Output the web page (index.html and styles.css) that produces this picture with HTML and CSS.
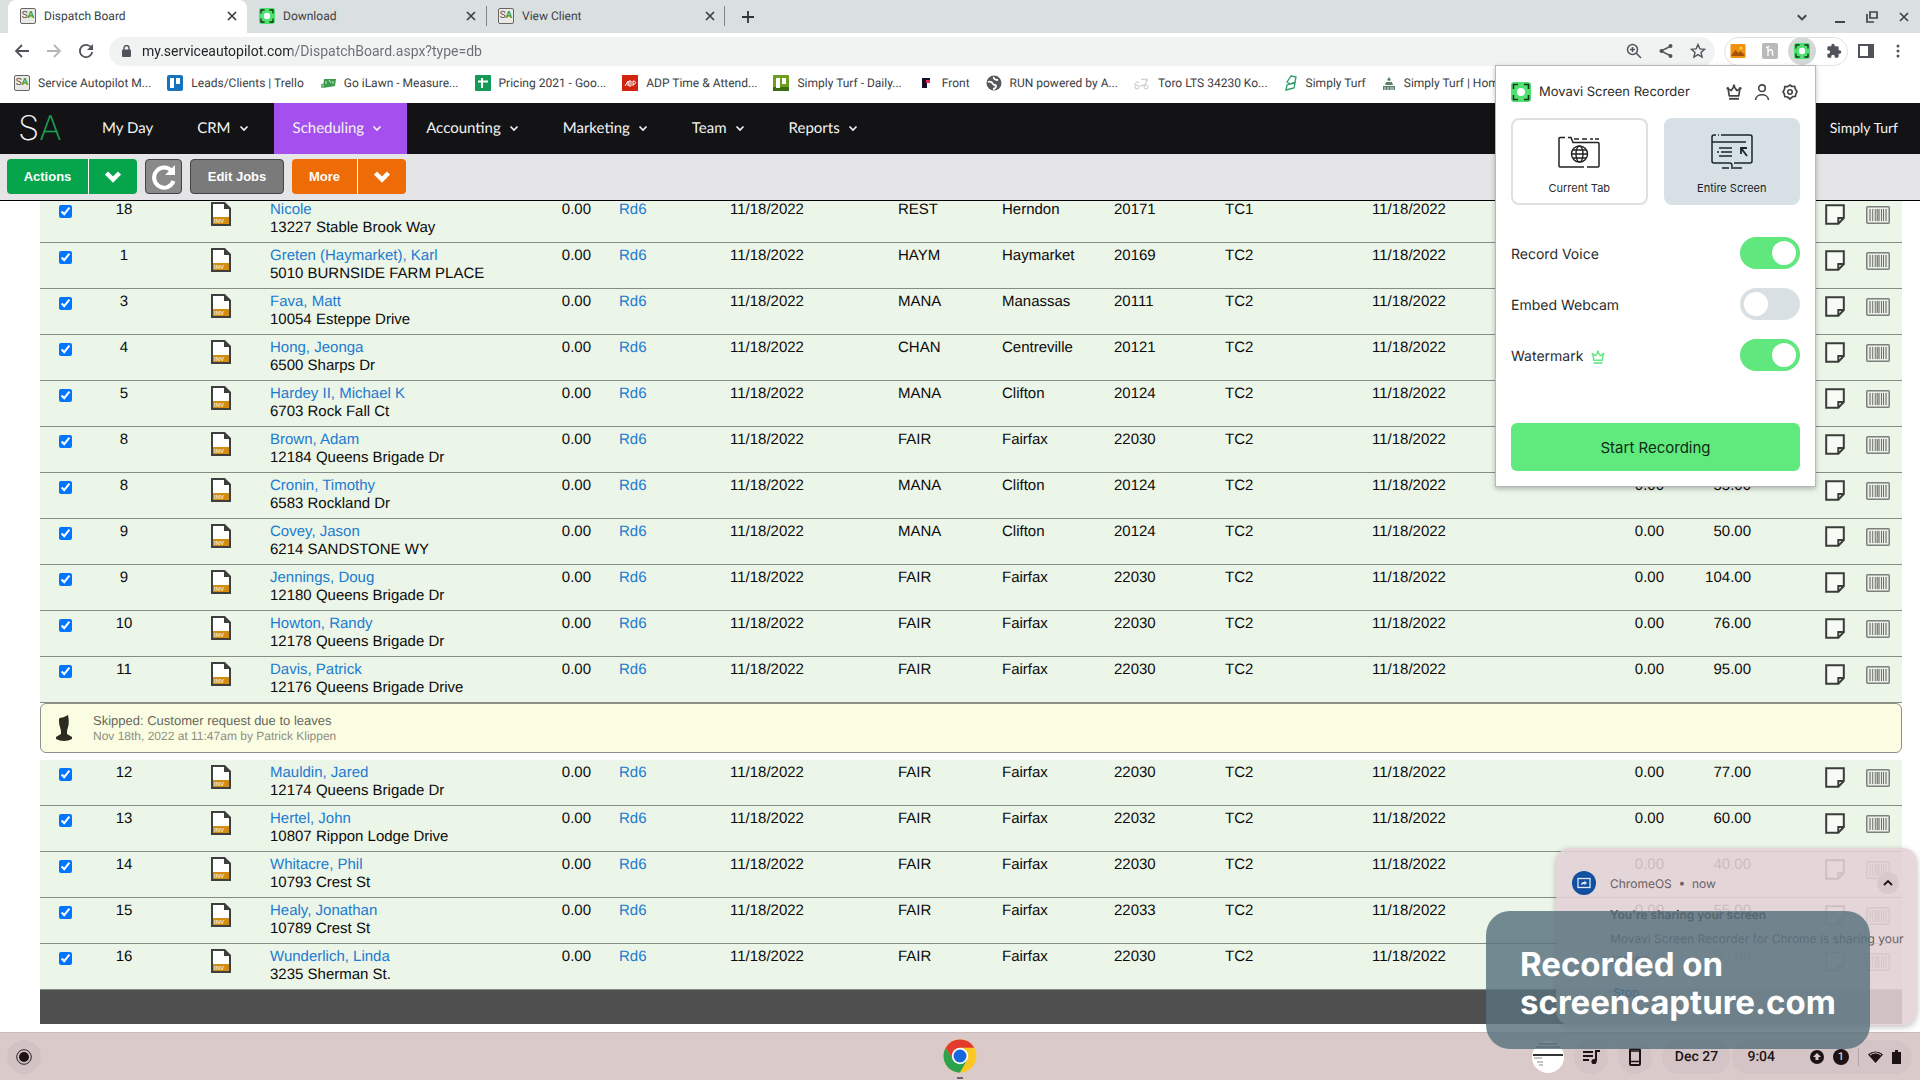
FILE: index.html
```html
<!DOCTYPE html>
<html lang="en">
<head>
    <meta charset="UTF-8">
    <meta name="viewport" content="width=device-width, initial-scale=1.0">
    <title>Dispatch Board</title>
    <link rel="stylesheet" href="styles.css">
</head>
<body>
    <!-- shared icons -->
    <svg class="sprite" aria-hidden="true">
        <symbol id="i-close" viewBox="0 0 10 10"><path d="M1 1l8 8M9 1L1 9" stroke="currentColor" stroke-width="1.7" fill="none"/></symbol>
        <symbol id="i-chev" viewBox="0 0 10 10"><path d="M1.5 3.5L5 7l3.5-3.5" stroke="currentColor" stroke-width="1.7" fill="none"/></symbol>
        <symbol id="i-bigchev" viewBox="0 0 18 14"><path d="M2.5 3L9 9.5 15.500 3" stroke="currentColor" stroke-width="4.500" fill="none"/></symbol>
        <symbol id="i-movavi" viewBox="0 0 20 20"><rect width="20" height="20" rx="3" fill="#4fe070"/><circle cx="10" cy="10" r="4" fill="#fff"/><path d="M2.500 7V2.500H7M13 2.500h4.500V7M17.500 13v4.500H13M7 17.500H2.500V13" stroke="#14301c" stroke-width="1.600" fill="none"/></symbol>
        <symbol id="i-crown" viewBox="0 0 16 16"><path d="M2.200 5l3 1.500L8 2.500l2.800 4 3-1.500-1 6.800H3.200z" stroke="currentColor" stroke-width="1.700" fill="none" stroke-linejoin="round"/><circle cx="8" cy="1.800" r="1.300" fill="currentColor"/><circle cx="1.800" cy="4.300" r="1.300" fill="currentColor"/><circle cx="14.200" cy="4.300" r="1.300" fill="currentColor"/><path d="M3 14.800h10" stroke="currentColor" stroke-width="1.900"/></symbol>
        <symbol id="i-inv" viewBox="0 0 20 24"><path d="M1 1h12.500L19 6.500V23H1z" fill="#fff" stroke="#3f3f3f" stroke-width="2"/><path d="M13 1v6h6z" fill="#3f3f3f"/><path d="M2 15h16v7H2z" fill="#d18c12"/><text x="3" y="21" font-family="Liberation Sans, sans-serif" font-size="6" font-weight="bold" fill="#fbe6b8">INV</text></symbol>
        <symbol id="i-note" viewBox="0 0 20 21"><path d="M1.200 1.200h17.600V14l-5.500 5.800H1.200z" fill="#f7fbf5" stroke="#3a3d3a" stroke-width="2"/><path d="M13.300 19.500V14h5.500" fill="none" stroke="#3a3d3a" stroke-width="2"/></symbol>
        <symbol id="i-bars" viewBox="0 0 24 18"><rect x=".75" y=".75" width="22.500" height="16.500" rx="1" fill="#e9eee7" stroke="#7d817c" stroke-width="1.500"/><path d="M4 3v12M9.500 3v12M13 3v12M20 3v12" stroke="#8b8e8a" stroke-width="1.500"/><path d="M6.700 3v12M11.300 3v12M15.500 3v12M17.500 3v12" stroke="#6c706b" stroke-width="1"/></symbol>
    </svg>

    <header class="browser">
        <div class="tabs">
            <div class="tab active"><span class="fav">S<b>A</b></span><a href="#board">Dispatch Board</a><button aria-label="Close Dispatch Board"><svg width="10" height="10"><use href="#i-close"/></svg></button></div>
            <div class="tab"><svg width="16" height="16"><use href="#i-movavi"/></svg><a href="#download">Download</a><button aria-label="Close Download"><svg width="10" height="10"><use href="#i-close"/></svg></button></div>
            <div class="tab divided"><span class="fav">S<b>A</b></span><a href="#client">View Client</a><button aria-label="Close View Client"><svg width="10" height="10"><use href="#i-close"/></svg></button></div>
            <button class="new-tab" aria-label="New tab"><svg width="12" height="12" viewBox="0 0 12 12"><path d="M6 0v12M0 6h12" stroke="#333" stroke-width="1.800"/></svg></button>
            <div class="window-buttons">
                <button aria-label="Search tabs"><svg width="12" height="12"><use href="#i-chev"/></svg></button>
                <button aria-label="Minimize"><svg width="10" height="12" viewBox="0 0 10 12"><path d="M0 11h10" stroke="currentColor" stroke-width="2"/></svg></button>
                <button aria-label="Restore"><svg width="12" height="12" viewBox="0 0 12 12"><path d="M4 1h7v6H4zM1 3v8h7" stroke="currentColor" stroke-width="1.700" fill="none"/></svg></button>
                <button aria-label="Close window"><svg width="10" height="10"><use href="#i-close"/></svg></button>
            </div>
        </div>

        <div class="address">
            <button aria-label="Back"><svg width="16" height="16" viewBox="0 0 16 16"><path d="M15 8H2M8 2L2 8l6 6" stroke="#50545a" stroke-width="1.800" fill="none"/></svg></button>
            <button aria-label="Forward"><svg width="16" height="16" viewBox="0 0 16 16"><path d="M1 8h13M8 2l6 6-6 6" stroke="#b4b6b9" stroke-width="1.800" fill="none"/></svg></button>
            <button aria-label="Reload"><svg width="16" height="16" viewBox="0 0 16 16"><path d="M13.500 5A6.200 6.200 0 1 0 14.200 9" stroke="#50545a" stroke-width="1.800" fill="none"/><path d="M15 1v6H9z" fill="#50545a"/></svg></button>
            <div class="omnibox">
                <svg width="9" height="12" viewBox="0 0 9 12"><rect y="4.500" width="9" height="7.500" rx="1" fill="#50545a"/><path d="M2 5V3a2.500 2.500 0 0 1 5 0v2" stroke="#50545a" stroke-width="1.400" fill="none"/></svg>
                <input type="text" aria-label="Address" value="my.serviceautopilot.com/DispatchBoard.aspx?type=db">
                <button aria-label="Zoom"><svg width="16" height="16" viewBox="0 0 16 16"><circle cx="6.500" cy="6.500" r="5" stroke="#50545a" stroke-width="1.500" fill="none"/><path d="M10 10l5 5M6.500 4v5M4 6.500h5" stroke="#50545a" stroke-width="1.500"/></svg></button>
                <button aria-label="Share"><svg width="16" height="16" viewBox="0 0 16 16"><path d="M13 3L3 8l10 5" stroke="#50545a" stroke-width="1.400" fill="none"/><circle cx="12.500" cy="3" r="2" fill="#50545a"/><circle cx="3.500" cy="8" r="2" fill="#50545a"/><circle cx="12.500" cy="13" r="2" fill="#50545a"/></svg></button>
                <button aria-label="Bookmark this tab"><svg width="16" height="16" viewBox="0 0 16 16"><path d="M8 1.500l1.900 4.400 4.700.4-3.600 3.100 1.100 4.700L8 11.600l-4.100 2.500L5 9.400 1.400 6.300l4.700-.4z" stroke="#50545a" stroke-width="1.400" fill="none"/></svg></button>
            </div>
            <div class="extensions">
                <svg width="16" height="14" viewBox="0 0 15 14"><rect width="15" height="14" rx="1" fill="#f0920f"/><path d="M1 11l4-5 3 3 2-2 4 4v1H1z" fill="#a5520a"/><circle cx="10.500" cy="4" r="1.500" fill="#ffd25a"/></svg>
                <svg width="16" height="16" viewBox="0 0 16 16"><rect width="16" height="16" rx="2" fill="#b9b9b9"/><path d="M6 3v10M6 9c1-3 5-3 4.500 0-.3 1.500-.3 3 1 3.500M4 4.500c2 0 3-1 3-1.500" stroke="#fff" stroke-width="1.300" fill="none"/></svg>
                <span class="ext-on"><svg width="16" height="16"><use href="#i-movavi"/></svg></span>
                <svg width="16" height="16" viewBox="0 0 24 24"><path fill="#50545a" d="M20.500 11H19V7a2 2 0 0 0-2-2h-4V3.500a2.500 2.500 0 0 0-5 0V5H4a2 2 0 0 0-2 2v3.800h1.500a2.700 2.700 0 0 1 0 5.400H2V20a2 2 0 0 0 2 2h3.800v-1.500a2.700 2.700 0 0 1 5.400 0V22H17a2 2 0 0 0 2-2v-4h1.500a2.500 2.500 0 0 0 0-5z"/></svg>
            </div>
            <button aria-label="Side panel"><svg width="16" height="14" viewBox="0 0 16 14"><path d="M1 1h14v12H1z" stroke="#50545a" stroke-width="2" fill="none"/><path d="M10 1h5v12h-5z" fill="#50545a"/></svg></button>
            <button class="menu" aria-label="Menu"><svg width="4" height="14" viewBox="0 0 4 14"><circle cx="2" cy="2" r="1.500" fill="#50545a"/><circle cx="2" cy="7" r="1.500" fill="#50545a"/><circle cx="2" cy="12" r="1.500" fill="#50545a"/></svg></button>
        </div>

        <nav class="bookmarks" aria-label="Bookmarks">
            <a href="#b1"><span class="fav">S<b>A</b></span>Service Autopilot M...</a>
            <a href="#b2"><svg width="16" height="16" viewBox="0 0 16 16"><rect width="16" height="16" rx="2" fill="#1673bd"/><rect x="3" y="3" width="4" height="10" fill="#fff"/><rect x="9" y="3" width="4" height="6" fill="#fff"/></svg>Leads/Clients | Trello</a>
            <a href="#b3"><svg width="16" height="16" viewBox="0 0 16 16"><path d="M4 4h12l-1 7-12 2z" fill="#3c9a4c"/><path d="M1 9l3-1v5H1z" fill="#76b97f"/><path d="M6 6v3M9 5l2 3M13 6v3" stroke="#c9ecc9"/></svg>Go iLawn - Measure...</a>
            <a href="#b4"><svg width="16" height="16" viewBox="0 0 16 16"><rect width="16" height="16" rx="1" fill="#149a56"/><path d="M3 6.500h10M7 3v10" stroke="#fff" stroke-width="2"/></svg>Pricing 2021 - Goo...</a>
            <a href="#b5"><svg width="16" height="16" viewBox="0 0 16 16"><rect width="16" height="16" fill="#d0240f"/><path d="M3 11l3-5v5M7 11V6h2v5zM11 11V6c4 0 3 4 0 3" stroke="#fff" fill="none"/></svg>ADP Time &amp; Attend...</a>
            <a href="#b6"><svg width="16" height="16" viewBox="0 0 16 16"><rect width="16" height="16" rx="1" fill="#6f9e1e"/><path d="M0 12h16v4H0z" fill="#3c6b12"/><rect x="3" y="3" width="4" height="10" fill="#fff"/><rect x="9" y="3" width="4" height="6" fill="#fff"/></svg>Simply Turf - Daily...</a>
            <a href="#b7"><svg width="16" height="16" viewBox="0 0 16 16"><path d="M4 3h8v4H9v6H4z" fill="#151026"/><path d="M8 5h4v3H8z" fill="#f0245e"/></svg>Front</a>
            <a href="#b8"><svg width="16" height="16" viewBox="0 0 16 16"><circle cx="8" cy="8" r="7.500" fill="#55595c"/><path d="M2 7c3-1 4 0 5 2s3 0 3 2-2 3-3 3M8 2c-1 2 2 3 4 3" stroke="#fff" stroke-width="1.800" fill="none"/></svg>RUN powered by A...</a>
            <a href="#b9"><svg width="16" height="16" viewBox="0 0 16 16"><path d="M1 10c0-3 3-4 4-2M7 4l6 1-2 5-5 1M13 3v3" stroke="#c3c3c3" fill="none"/><circle cx="3" cy="12" r="2" stroke="#c3c3c3" fill="none"/><circle cx="12" cy="12" r="2" stroke="#d6c3c3" fill="none"/></svg>Toro LTS 34230 Ko...</a>
            <a href="#b10"><svg width="14" height="16" viewBox="0 0 14 16"><path d="M7 1l5 1-1 5-5 2 5-1-1 5-8 2 1-5 3-1-3-2z" stroke="#2d9c68" stroke-width="1.300" fill="none"/></svg>Simply Turf</a>
            <a href="#b11"><svg width="14" height="16" viewBox="0 0 14 16"><path d="M7 2l2 3-2 1-2-1zM4 7h6l1 3H3zM1 11h12v4H1z" fill="#5d7f6c"/><path d="M3 12v3M6 12v3M9 12v3M11 12v3" stroke="#fff" stroke-width=".8"/></svg>Simply Turf | Home</a>
        </nav>
    </header>

    <nav class="main-nav" aria-label="Main">
        <a class="logo" href="#home" aria-label="Service Autopilot">S<span>A</span></a>
        <a href="#day">My Day</a>
        <a href="#crm">CRM<svg width="10" height="10"><use href="#i-chev"/></svg></a>
        <a class="current" href="#scheduling">Scheduling<svg width="10" height="10"><use href="#i-chev"/></svg></a>
        <a href="#accounting">Accounting<svg width="10" height="10"><use href="#i-chev"/></svg></a>
        <a href="#marketing">Marketing<svg width="10" height="10"><use href="#i-chev"/></svg></a>
        <a href="#team">Team<svg width="10" height="10"><use href="#i-chev"/></svg></a>
        <a href="#reports">Reports<svg width="10" height="10"><use href="#i-chev"/></svg></a>
        <a class="account" href="#account">Simply Turf</a>
    </nav>

    <div class="actions">
        <div class="split green"><button>Actions</button><button aria-label="Actions menu"><svg width="18" height="14"><use href="#i-bigchev"/></svg></button></div>
        <button class="refresh" aria-label="Refresh"><svg width="28" height="28" viewBox="0 0 28 28"><path d="M22 8.500A10 10 0 1 0 23.500 18" stroke="#fff" stroke-width="4" fill="none"/><path d="M25 2v10H15z" fill="#fff"/></svg></button>
        <button class="edit">Edit Jobs</button>
        <div class="split orange"><button>More</button><button aria-label="More menu"><svg width="18" height="14"><use href="#i-bigchev"/></svg></button></div>
    </div>

    <main id="board">
        <table class="jobs">
            <colgroup>
                <col class="w-check"><col class="w-num"><col class="w-inv"><col class="w-name"><col class="w-hours"><col class="w-round"><col class="w-date"><col class="w-map"><col class="w-city"><col class="w-zip"><col class="w-team"><col><col class="w-cost"><col class="w-price"><col class="w-note"><col class="w-bars">
            </colgroup>
            <tbody id="jobs"></tbody>
        </table>
        <div class="table-foot"></div>
    </main>

    <footer class="shelf">
        <button class="launcher" aria-label="Launcher"><svg width="16" height="16" viewBox="0 0 16 16"><circle cx="8" cy="8" r="7.300" fill="none" stroke="#2a1f22"/><circle cx="8" cy="8" r="5" fill="#1d1315"/></svg></button>
        <button class="chrome" aria-label="Chrome">
            <svg width="34" height="34" viewBox="0 0 34 34"><circle cx="17" cy="17" r="16.500" fill="#fbc823"/><path d="M2.700 8.800A16.500 16.500 0 0 1 31.300 8.800H17L9.900 21.100z" fill="#e33b2e"/><path d="M2.700 8.800A16.500 16.500 0 0 0 17 33.500l7.100-12.400H9.900z" fill="#2ba24c"/><circle cx="17" cy="17" r="8.200" fill="#fff"/><circle cx="17" cy="17" r="6.500" fill="#1768dd"/></svg>
            <span></span>
        </button>
        <div class="tray">
            <svg class="thumb" width="32" height="32" viewBox="0 0 32 32"><circle cx="16" cy="16" r="16" fill="#fff"/><path d="M7 3h18M4 6h24" stroke="#555" stroke-width="1.500"/><path d="M1 14h30" stroke="#333" stroke-width="2"/><path d="M2 17h8M5 21h6M7 24h4" stroke="#888"/></svg>
            <span class="pill"><svg width="17" height="16" viewBox="0 0 17 16"><path d="M0 3h10M0 7h10M0 11h6" stroke="#1d1315" stroke-width="1.800"/><path d="M13 12V2h4" stroke="#1d1315" stroke-width="2" fill="none"/><circle cx="11" cy="12.500" r="2.600" fill="#1d1315"/></svg></span>
            <span class="pill"><svg width="12" height="18" viewBox="0 0 12 18"><rect x="1" y="1" width="10" height="16" rx="1" stroke="#1d1315" stroke-width="2" fill="none"/><path d="M1 13.500h10M1 3h10" stroke="#1d1315" stroke-width="1.500"/></svg></span>
            <span class="pill day">Dec 27</span>
            <div class="pill status">
                <span class="clock">9:04</span>
                <svg width="14" height="14" viewBox="0 0 14 14"><circle cx="7" cy="7" r="7" fill="#1d1315"/><path d="M7 3l4 4H8.500v3h-3V7H3z" fill="#dccbcd"/></svg>
                <span class="count">1</span>
                <i></i>
                <svg width="15" height="12" viewBox="0 0 15 12"><path d="M0 3.500a11 11 0 0 1 15 0L7.500 12z" fill="#1d1315"/><path d="M2 4a9 9 0 0 1 11 0" stroke="#dccbcd" fill="none"/></svg>
                <svg width="9" height="14" viewBox="0 0 9 14"><path d="M3 0h3v2h3v12H0V2h3z" fill="#1d1315"/></svg>
            </div>
        </div>
    </footer>

    <section class="recorder" aria-label="Movavi Screen Recorder">
        <div class="recorder-head">
            <svg width="20" height="20"><use href="#i-movavi"/></svg>
            <h2>Movavi Screen Recorder</h2>
            <button aria-label="Premium"><svg width="16" height="16"><use href="#i-crown"/></svg></button>
            <button aria-label="Profile"><svg width="16" height="16" viewBox="0 0 16 16"><circle cx="8" cy="4.200" r="3.300" stroke="currentColor" stroke-width="1.600" fill="none"/><path d="M1.500 16c.5-7 12.500-7 13 0" stroke="currentColor" stroke-width="1.600" fill="none"/></svg></button>
            <button aria-label="Settings"><svg width="16" height="16" viewBox="0 0 16 16"><path d="M8 1l2 1.500 2.700-.1.600 2.600L15 7.500 13.900 10l-.6 2.500-2.600.2L8 15l-2.500-2-2.700-.3L2.300 10 1 7.700 2.500 5.400l.3-2.700 2.900-.1z" stroke="currentColor" stroke-width="1.700" fill="none" stroke-linejoin="round"/><circle cx="8" cy="8" r="2.200" stroke="currentColor" stroke-width="1.600" fill="none"/></svg></button>
        </div>
        <div class="modes">
            <button>
                <svg width="42" height="38" viewBox="0 0 42 38"><path d="M26 34H2a1 1 0 0 1-1-1V5.500a1 1 0 0 1 1-1h5M10 4.500h3l2 5h25a1 1 0 0 1 1 1V33a1 1 0 0 1-1 1H29" stroke="#222" stroke-width="1.500" fill="none"/><path d="M16 6h5M24 6h5M32 6h3M37 6h4" stroke="#222" stroke-width="1.500"/><g stroke="#222" stroke-width="1.400" fill="none"><circle cx="21.500" cy="21" r="8"/><ellipse cx="21.500" cy="21" rx="3.500" ry="8"/><path d="M13.500 21h16M15 17h13M15 25h13"/></g></svg>
                Current Tab
            </button>
            <button class="selected">
                <svg width="42" height="38" viewBox="0 0 42 38"><path d="M5 2H3a2 2 0 0 0-2 2v24a2 2 0 0 0 2 2h15c3 0 3 1 3 4M7 2h1M10 2h29a2 2 0 0 1 2 2v24a2 2 0 0 1-2 2H23M11 35h7M20 35h11M1 9h34" stroke="#18262c" stroke-width="1.500" fill="none"/><path d="M8 15h13M6 19h2M10 19h11M8 23h13" stroke="#18262c" stroke-width="1.500"/><path d="M30 21v-6h6M30 15l6 8" stroke="#18262c" stroke-width="1.800" fill="none"/></svg>
                Entire Screen
            </button>
        </div>
        <label class="option">Record Voice<input type="checkbox" checked></label>
        <label class="option">Embed Webcam<input type="checkbox"></label>
        <label class="option">Watermark<svg width="14" height="14"><use href="#i-crown"/></svg><input type="checkbox" checked></label>
        <button class="start">Start Recording</button>
    </section>

    <section class="notice" aria-label="Notification">
        <svg width="24" height="24" viewBox="0 0 24 24"><circle cx="12" cy="12" r="12" fill="#114fa0"/><rect x="6" y="7.500" width="12" height="9" fill="none" stroke="#dfe9f7" stroke-width="1.300"/><path d="M9 14c0-2.500 1.500-3 3.500-3V9.500L15 12l-2.500 2.200v-1.500" fill="#dfe9f7"/></svg>
        <div>
            <p class="source">ChromeOS&nbsp; • &nbsp;now</p>
            <h3>You're sharing your screen</h3>
            <p>Movavi Screen Recorder for Chrome is sharing your screen</p>
            <button class="stop">Stop</button>
        </div>
        <button class="collapse" aria-label="Collapse"><svg width="10" height="10" viewBox="0 0 10 10"><path d="M1 7l4-4 4 4" stroke="#1d1315" stroke-width="1.800" fill="none"/></svg></button>
    </section>

    <div class="watermark">Recorded on<br>screencapture.com</div>

    <script>
        const jobs = [
            ['18', 'Nicole', '13227 Stable Brook Way', 'REST', 'Herndon', '20171', 'TC1'],
            ['1', 'Greten (Haymarket), Karl', '5010 BURNSIDE FARM PLACE', 'HAYM', 'Haymarket', '20169', 'TC2'],
            ['3', 'Fava, Matt', '10054 Esteppe Drive', 'MANA', 'Manassas', '20111', 'TC2'],
            ['4', 'Hong, Jeonga', '6500 Sharps Dr', 'CHAN', 'Centreville', '20121', 'TC2'],
            ['5', 'Hardey II, Michael K', '6703 Rock Fall Ct', 'MANA', 'Clifton', '20124', 'TC2'],
            ['8', 'Brown, Adam', '12184 Queens Brigade Dr', 'FAIR', 'Fairfax', '22030', 'TC2'],
            ['8', 'Cronin, Timothy', '6583 Rockland Dr', 'MANA', 'Clifton', '20124', 'TC2', '55.00'],
            ['9', 'Covey, Jason', '6214 SANDSTONE WY', 'MANA', 'Clifton', '20124', 'TC2', '50.00'],
            ['9', 'Jennings, Doug', '12180 Queens Brigade Dr', 'FAIR', 'Fairfax', '22030', 'TC2', '104.00'],
            ['10', 'Howton, Randy', '12178 Queens Brigade Dr', 'FAIR', 'Fairfax', '22030', 'TC2', '76.00'],
            ['11', 'Davis, Patrick', '12176 Queens Brigade Drive', 'FAIR', 'Fairfax', '22030', 'TC2', '95.00'],
            ['12', 'Mauldin, Jared', '12174 Queens Brigade Dr', 'FAIR', 'Fairfax', '22030', 'TC2', '77.00'],
            ['13', 'Hertel, John', '10807 Rippon Lodge Drive', 'FAIR', 'Fairfax', '22032', 'TC2', '60.00'],
            ['14', 'Whitacre, Phil', '10793 Crest St', 'FAIR', 'Fairfax', '22030', 'TC2', '40.00'],
            ['15', 'Healy, Jonathan', '10789 Crest St', 'FAIR', 'Fairfax', '22033', 'TC2', '55.00'],
            ['16', 'Wunderlich, Linda', '3235 Sherman St.', 'FAIR', 'Fairfax', '22030', 'TC2', '50.00']
        ];

        // skipped note goes under the job with this number
        const skipped = `<tr class="skipped"><td colspan="16"><div>
            <svg width="18" height="26" viewBox="0 0 18 26"><path d="M4 4c1-2 3-1 5-2l4-2c1 4 1 9 0 12l-1 4v3l5 3v2c-5 2.500-11 2.500-16 0v-2l5-3v-3l-1-4C4 9 4 7 4 4z" fill="#2b2c20"/></svg>
            <p>Skipped: Customer request due to leaves<small>Nov 18th, 2022 at 11:47am by Patrick Klippen</small></p>
        </div></td></tr>`;

        document.getElementById('jobs').innerHTML = jobs.map(([num, name, street, map, city, zip, team, price]) => `
            <tr>
                <td class="check"><input type="checkbox" checked aria-label="Select ${name}"></td>
                <td class="num">${num}</td>
                <td class="inv"><svg width="20" height="24"><use href="#i-inv"/></svg></td>
                <td><a href="#job">${name}</a><br>${street}</td>
                <td class="right">0.00</td>
                <td class="round"><a href="#round">Rd6</a></td>
                <td>11/18/2022</td>
                <td>${map}</td>
                <td>${city}</td>
                <td>${zip}</td>
                <td>${team}</td>
                <td>11/18/2022</td>
                <td class="right">${price ? '0.00' : ''}</td>
                <td class="right">${price || ''}</td>
                <td class="note"><svg width="20" height="21"><use href="#i-note"/></svg></td>
                <td class="bars"><svg width="24" height="18"><use href="#i-bars"/></svg></td>
            </tr>${num === '11' ? skipped : ''}`).join('');
    </script>
</body>
</html>
```
FILE: styles.css
```css
* {
    box-sizing: border-box;
}
body {
    margin: 0;
    min-height: 100vh;
    display: flex;
    flex-direction: column;
    position: relative;
    background: #fff;
    color: #111;
    font-family: Roboto, sans-serif;
    text-rendering: geometricPrecision;
    overflow: hidden;
}
a {
    color: inherit;
    text-decoration: none;
}
button {
    border: none;
    background: none;
    padding: 0;
    font: inherit;
    color: inherit;
    cursor: pointer;
    display: flex;
    align-items: center;
    justify-content: center;
}
p, h2, h3 {
    margin: 0;
}
svg {
    flex: none;
}
.sprite {
    display: none;
}

/* browser chrome */
.tabs {
    display: flex;
    align-items: center;
    height: 33px;
    padding: 0 8px;
    background: #dadfe0;
    font-size: 12px;
    color: #3c4043;
}
.tab {
    display: flex;
    align-items: center;
    gap: 8px;
    width: 239px;
    height: 33px;
    padding: 0 10px 2px 12px;
}
.tab a {
    flex: 1;
}
.tab.active {
    background: #fff;
    border-radius: 8px 8px 0 0;
}
.tab.divided {
    background: linear-gradient(#80868b, #80868b) 0 6px / 1px 20px no-repeat, linear-gradient(#80868b, #80868b) 100% 6px / 1px 20px no-repeat;
}
.fav {
    display: flex;
    align-items: center;
    justify-content: center;
    width: 16px;
    height: 16px;
    border: 1px solid #666;
    border-radius: 2px;
    background: #e9e9e6;
    color: #555;
    font-size: 10px;
    line-height: 12px;
}
.fav b {
    color: #4c9a2a;
}
.new-tab {
    width: 46px;
    height: 30px;
}
.window-buttons {
    display: flex;
    align-items: center;
    gap: 21px;
    margin-left: auto;
    padding-right: 3px;
    color: #444;
}
.window-buttons button:first-child {
    margin-right: 6px;
}
.address {
    display: flex;
    align-items: center;
    gap: 16px;
    height: 36px;
    padding: 0 20px 0 14px;
}
.omnibox {
    display: flex;
    align-items: center;
    gap: 16px;
    flex: 1;
    height: 29px;
    margin: 0 -7px 0 -1px;
    padding: 0 9px 0 13px;
    border-radius: 15px;
    background: #f1f2f2;
}
.omnibox input {
    flex: 1;
    margin-left: -5px;
    padding: 0;
    border: none;
    outline: none;
    font: 14px Roboto, sans-serif;
    color: transparent;
    background: linear-gradient(to right, #202124 150px, #6a6e73 150px);
    -webkit-background-clip: text;
    background-clip: text;
}
.extensions {
    display: flex;
    align-items: center;
    gap: 16px;
    height: 29px;
    margin-right: -6px;
    padding: 0 5px;
    border: 1px solid #dfe1e5;
    border-radius: 15px;
}
.ext-on {
    display: flex;
    margin: 0 -6px;
    padding: 6px;
    border-radius: 50%;
    background: #d5d8d8;
}
.menu {
    margin-left: 6px;
}
.bookmarks {
    display: flex;
    align-items: center;
    gap: 16px;
    height: 34px;
    padding: 0 14px 6px;
    overflow: hidden;
    white-space: nowrap;
    font-size: 12px;
    color: #3c4043;
}
.bookmarks a {
    display: flex;
    align-items: center;
    gap: 8px;
}

/* app header */
.main-nav {
    display: flex;
    height: 51px;
    background: #131315;
    color: #f4f4f4;
    font: 15px Lato, sans-serif;
}
.main-nav a {
    display: flex;
    align-items: center;
    gap: 8px;
    padding: 0 25px 2px 19px;
}
.main-nav .logo {
    gap: 0;
    width: 83px;
    padding: 0 0 0 18px;
    font: 200 34px Inter, sans-serif;
}
.logo span {
    color: #1ba552;
}
.main-nav .current {
    background: #a44fee;
}
.main-nav .account {
    margin-left: auto;
    padding-right: 22px;
    font-size: 14px;
}
.actions {
    display: flex;
    gap: 8px;
    height: 47px;
    padding: 5px 7px;
    border-bottom: 1px solid #000;
    background: #e5e4e6;
    color: #fff;
    font: bold 13px "Liberation Sans", Arial, sans-serif;
}
.actions > * {
    height: 35px;
    border-radius: 4px;
}
.split {
    display: flex;
    overflow: hidden;
}
.split button:first-child {
    border-right: 1px solid #fff;
}
.split button:last-child {
    width: 48px;
}
.green {
    background: #06a54b;
}
.green button:first-child {
    width: 82px;
}
.orange {
    background: #ee6c07;
}
.orange button:first-child {
    width: 66px;
}
.refresh, .edit {
    border: 1px solid #444;
    background: #7b7a7b;
}
.refresh {
    width: 37px;
    background: #8b8a8b;
}
.edit {
    width: 94px;
}

/* dispatch board */
main {
    flex: 1;
    padding: 0 18px 8px 40px;
    overflow: hidden;
}
.jobs {
    width: 100%;
    margin-top: -4px;
    border-collapse: separate;
    border-spacing: 0;
    table-layout: fixed;
    font: 15px/18px "Liberation Sans", Arial, sans-serif;
    color: #0b0b0b;
}
.jobs tr {
    height: 46px;
}
.jobs td {
    padding: 4px 0 0;
    border-bottom: 1px solid #868d84;
    background: #ebf5e8;
    vertical-align: top;
    white-space: nowrap;
}
.jobs a {
    color: #1c7bd0;
}
.jobs svg {
    display: block;
}
.jobs .check, .jobs .num {
    text-align: center;
}
.check input {
    display: block;
    margin: 4px auto 0;
    width: 13px;
    height: 13px;
}
.jobs .inv {
    padding: 5px 0 0 54px;
}
.jobs .right {
    text-align: right;
}
.jobs .round {
    padding-left: 28px;
}
.jobs .note {
    padding: 7px 0 0 74px;
}
.jobs .bars {
    padding: 9px 0 0 11px;
}
.w-check { width: 51px; }
.w-num { width: 66px; }
.w-inv { width: 113px; }
.w-name { width: 250px; }
.w-hours { width: 71px; }
.w-round { width: 139px; }
.w-date { width: 168px; }
.w-map { width: 104px; }
.w-city { width: 112px; }
.w-zip { width: 111px; }
.w-team { width: 147px; }
.w-cost { width: 144px; }
.w-price { width: 87px; }
.w-note { width: 104px; }
.w-bars { width: 47px; }
.jobs .skipped td {
    padding: 0 0 7px;
    border: none;
    background: #fff;
}
.skipped div {
    display: flex;
    align-items: center;
    gap: 20px;
    height: 50px;
    padding-left: 14px;
    border: 1px solid #8f9088;
    border-radius: 6px;
    background: #fbfde3;
    font-size: 13px;
    line-height: 16px;
    color: #66665a;
}
.skipped small {
    display: block;
    font-size: 12px;
    line-height: 14px;
    color: #8d8d80;
}
.table-foot {
    height: 34px;
    background: #504f50;
}

/* ChromeOS shelf */
.shelf {
    display: flex;
    align-items: center;
    justify-content: space-between;
    height: 48px;
    padding: 0 8px 0 7px;
    border-top: 1px solid #cbbcbe;
    background: #dbcaca;
    color: #1d1315;
    position: relative;
}
.launcher {
    width: 34px;
    height: 34px;
    border-radius: 50%;
    background: #d3c2c4;
}
.chrome {
    position: absolute;
    left: 50%;
    top: 6px;
    margin-left: -17px;
    flex-direction: column;
    gap: 4px;
}
.chrome span {
    width: 6px;
    height: 2px;
    background: #6f6365;
}
.tray {
    display: flex;
    align-items: center;
    gap: 10px;
    font-size: 14px;
    font-weight: 500;
}
.pill {
    display: flex;
    align-items: center;
    justify-content: center;
    height: 34px;
    min-width: 34px;
    border-radius: 17px;
    background: #d5c4c6;
}
.pill.day {
    width: 68px;
}
.pill.status {
    gap: 9px;
    margin-left: -8px;
    padding: 0 11px 0 15px;
}
.clock {
    margin-right: 26px;
}
.count {
    width: 16px;
    height: 16px;
    border-radius: 50%;
    background: #1d1315;
    color: #dbcaca;
    font-size: 11px;
    line-height: 16px;
    text-align: center;
}
.status i {
    width: 1px;
    height: 18px;
    background: #b5a5a8;
}

/* recorder popup */
.recorder {
    position: absolute;
    top: 65px;
    right: 104px;
    width: 321px;
    padding: 15px;
    border: 1px solid #b4b8b6;
    background: #fff;
    box-shadow: 0 2px 5px rgba(0, 0, 0, .25);
    color: #2b2b2b;
    font: 14px Inter, sans-serif;
}
.recorder-head {
    display: flex;
    align-items: center;
    gap: 12px;
    height: 22px;
    color: #444;
}
.recorder-head h2 {
    flex: 1;
    margin-left: -4px;
    font-size: 13px;
    font-weight: 400;
    color: #2b2b2b;
    white-space: nowrap;
}
.recorder-head button:last-child {
    margin-right: 2px;
}
.modes {
    display: flex;
    gap: 16px;
    margin: 15px 0 24px;
}
.modes button {
    flex: 1;
    flex-direction: column;
    gap: 10px;
    height: 87px;
    padding-top: 4px;
    border: 2px solid #dfe0e1;
    border-radius: 8px;
    font-size: 11px;
}
.modes .selected {
    border-color: #d7e1e5;
    background: #d7e1e5;
    color: #15222a;
}
.option {
    display: flex;
    align-items: center;
    gap: 8px;
    height: 51px;
}
.option svg {
    color: #62e783;
}
.option input {
    appearance: none;
    position: relative;
    width: 60px;
    height: 32px;
    margin: 0 0 4px auto;
    border-radius: 16px;
    background: #d9e0e4;
}
.option input::before {
    content: "";
    position: absolute;
    top: 4px;
    left: 4px;
    width: 24px;
    height: 24px;
    border-radius: 50%;
    background: #fff;
}
.option input:checked {
    background: #60e87f;
}
.option input:checked::before {
    left: 32px;
}
.start {
    width: 100%;
    height: 48px;
    margin-top: 41px;
    border-radius: 6px;
    background: #60ea7e;
    color: #0f2b16;
    font-size: 15px;
}

/* screen sharing notification */
.notice {
    position: absolute;
    right: 3px;
    bottom: 55px;
    display: flex;
    gap: 14px;
    width: 361px;
    height: 177px;
    padding: 23px 0 23px 16px;
    border-radius: 14px;
    background: rgba(226, 209, 213, .88);
    box-shadow: 0 2px 6px rgba(0, 0, 0, .25);
    color: #6a6063;
    font: 12px/20px Inter, sans-serif;
}
.notice div {
    width: 300px;
}
.notice .source {
    line-height: 26px;
}
.notice h3 {
    margin: 8px 0 4px;
    font-size: 12px;
    font-weight: 600;
    line-height: 20px;
    color: #3d3437;
}
.notice .stop {
    margin: 14px 0 0 3px;
    font-weight: 500;
    color: #1a5fc0;
}
.notice .collapse {
    position: absolute;
    top: 24px;
    right: 18px;
    width: 22px;
    height: 22px;
    border-radius: 50%;
    background: #dac9cc;
}
.watermark {
    position: absolute;
    right: 50px;
    bottom: 31px;
    width: 384px;
    height: 138px;
    padding: 34px;
    border-radius: 24px;
    background: rgba(88, 114, 124, .82);
    color: #fff;
    font: 700 33px/38px Inter, sans-serif;
}
```
